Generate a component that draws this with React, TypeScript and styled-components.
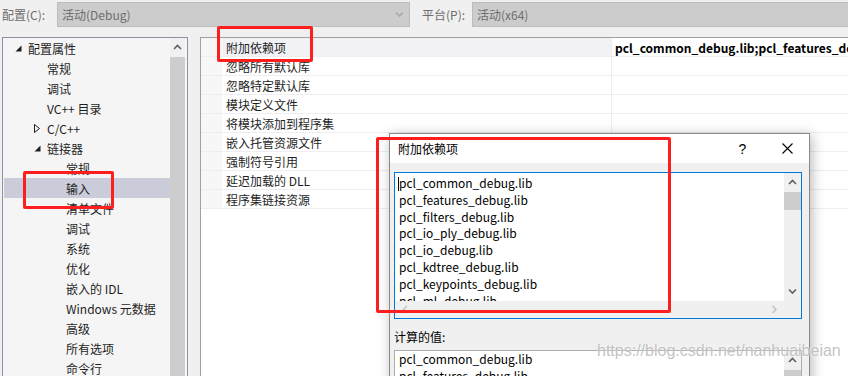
import React from "react"
import styled, { createGlobalStyle } from "styled-components"

const GlobalStyle = createGlobalStyle`
  html, body {
    margin: 0;
    padding: 0;
    background: #f0f0f0;
  }
  body {
    font-family: "Noto Sans CJK SC", "Noto Sans", sans-serif;
    font-size: 12px;
    color: #1e1e1e;
  }
`

const Screen = styled.div`
  position: relative;
  width: 848px;
  height: 376px;
  overflow: hidden;
  background: #f0f0f0;
  display: flex;
  flex-direction: column;
`

/* ---------- top configuration bar ---------- */

const TopBar = styled.div`
  display: flex;
  align-items: center;
  height: 25px;
  padding: 2px 0 10px 2px;
`

const FieldLabel = styled.span<{ $width: number; $gap?: number }>`
  width: ${({ $width }) => $width}px;
  margin-left: ${({ $gap }) => $gap ?? 0}px;
  color: #6d6d6d;
  white-space: nowrap;
  flex-shrink: 0;
`

const Combo = styled.div<{ $width?: number }>`
  ${({ $width }) => ($width ? `width: ${$width}px; flex-shrink: 0;` : "flex: 1; margin-right: -2px;")}
  height: 25px;
  box-sizing: border-box;
  border: 1px solid #bcbcbc;
  background: #cccccc;
  color: #6d6d6d;
  display: flex;
  align-items: center;
  justify-content: space-between;
  padding: 0 5px 0 4px;
`

/* ---------- main panels ---------- */

const Workspace = styled.div`
  flex: 1;
  min-height: 0;
  display: flex;
  gap: 12px;
  padding-left: 2px;
`

const TreePanel = styled.div`
  width: 186px;
  flex-shrink: 0;
  box-sizing: border-box;
  border: 1px solid #8e90a6;
  border-bottom: none;
  background: #f5f5f5;
  display: flex;
`

const Tree = styled.div`
  flex: 1;
  display: flex;
  flex-direction: column;
  padding-left: 1px;
`

const TreeRow = styled.div<{ $level: number; $selected?: boolean }>`
  height: 20px;
  flex-shrink: 0;
  display: flex;
  align-items: center;
  padding-left: ${({ $level }) => 8 + $level * 19}px;
  background: ${({ $selected }) => ($selected ? "#cbccda" : "transparent")};
  white-space: nowrap;
`

const ToggleSlot = styled.span`
  width: 16px;
  height: 20px;
  display: flex;
  align-items: center;
  padding-left: 3px;
  box-sizing: border-box;
`

const Scrollbar = styled.div`
  width: 17px;
  flex-shrink: 0;
  display: flex;
  flex-direction: column;
  padding: 0 2px 0 0;
  box-sizing: border-box;
`

const ScrollButton = styled.div`
  height: 19px;
  flex-shrink: 0;
  display: flex;
  align-items: center;
  justify-content: center;
  background: #f0f0f0;
`

const ScrollThumb = styled.div<{ $height?: number }>`
  background: #cdcdcd;
  ${({ $height }) => ($height ? `height: ${$height}px; flex-shrink: 0;` : "flex: 1;")}
`

const ScrollSpacer = styled.div`
  flex: 1;
`

const GridPanel = styled.div`
  flex: 1;
  margin-right: -40px;
  border-left: 1px solid #a0a0a0;
  border-top: 1px solid #a0a0a0;
  background: #ffffff;
  display: flex;
  flex-direction: column;
`

const PropRow = styled.div`
  display: grid;
  grid-template-columns: 21px 390px 1fr;
  height: 19px;
  flex-shrink: 0;
  border-bottom: 1px solid #eeeef2;
  box-sizing: border-box;
`

const Gutter = styled.div`
  background: #f7f7f7;
`

const PropName = styled.div<{ $active?: boolean }>`
  display: flex;
  align-items: center;
  padding-left: 4px;
  border-right: 1px solid #eeeef2;
  background: ${({ $active }) => ($active ? "#f2f2f6" : "#ffffff")};
  white-space: nowrap;
`

const PropValue = styled.div`
  display: flex;
  align-items: center;
  padding-left: 3px;
  font-weight: bold;
  color: #000;
  white-space: nowrap;
  overflow: hidden;
`

/* ---------- dialog ---------- */

const Dialog = styled.div`
  position: absolute;
  left: 389px;
  top: 133px;
  width: 421px;
  height: 260px;
  box-sizing: border-box;
  border: 1px solid #8a8a8a;
  background: #f0f0f0;
  box-shadow: 2px 2px 12px rgba(0, 0, 0, 0.28);
  display: flex;
  flex-direction: column;
`

const TitleBar = styled.div`
  height: 29px;
  flex-shrink: 0;
  background: #ffffff;
  display: flex;
  align-items: center;
  padding-left: 8px;
  color: #000;
`

const Title = styled.span`
  flex: 1;
`

const TitleButton = styled.span<{ $width: number }>`
  width: ${({ $width }) => $width}px;
  height: 29px;
  display: flex;
  align-items: center;
  justify-content: center;
  font-family: "Liberation Sans", sans-serif;
  font-size: 14px;
  color: #000;
`

const DialogBody = styled.div`
  flex: 1;
  display: flex;
  flex-direction: column;
  padding: 9px 7px 0 4px;
`

const EditBox = styled.div`
  height: 147px;
  flex-shrink: 0;
  box-sizing: border-box;
  border: 1px solid #0078d7;
  display: grid;
  grid-template-columns: 1fr 17px;
  grid-template-rows: 1fr 17px;
  background: #f0f0f0;
`

const Lines = styled.div<{ $padTop: number }>`
  background: #ffffff;
  overflow: hidden;
  padding: ${({ $padTop }) => $padTop}px 0 0 4px;
  line-height: 16.8px;
  color: #000;
`

const Line = styled.div`
  white-space: nowrap;
  position: relative;
`

const Caret = styled.span`
  position: absolute;
  left: -1px;
  top: 2px;
  width: 1px;
  height: 14px;
  background: #000;
`

const VScroll = styled.div`
  display: flex;
  flex-direction: column;
  background: #f0f0f0;
`

const HScroll = styled.div`
  display: flex;
  align-items: center;
  justify-content: space-between;
  padding: 0 6px 0 7px;
  background: #f0f0f0;
`

const SectionLabel = styled.div`
  margin-top: 10px;
  line-height: 16px;
  color: #000;
`

const ValueBox = styled.div`
  margin-top: 5px;
  flex: 1;
  box-sizing: border-box;
  border: 1px solid #adadad;
  background: #ffffff;
  display: grid;
  grid-template-columns: 1fr 17px;
`

/* ---------- overlays ---------- */

const Highlight = styled.div<{ $x: number; $y: number; $w: number; $h: number }>`
  position: absolute;
  left: ${({ $x }) => $x}px;
  top: ${({ $y }) => $y}px;
  width: ${({ $w }) => $w}px;
  height: ${({ $h }) => $h}px;
  box-sizing: border-box;
  border: 3px solid #fe1e1e;
  border-radius: 2px;
  pointer-events: none;
`

const Watermark = styled.div`
  position: absolute;
  left: 597px;
  top: 342px;
  font-family: "Liberation Sans", Arial, sans-serif;
  font-size: 16px;
  color: rgba(175, 175, 175, 0.75);
  text-shadow: 0 0 2px rgba(255, 255, 255, 0.9);
  white-space: nowrap;
  pointer-events: none;
`

/* ---------- icons ---------- */

const Chevron = ({ dir, color = "#606060" }: { dir: "up" | "down" | "left" | "right"; color?: string }) => {
  const pts = {
    up: "1,5 4.5,1.5 8,5",
    down: "1,1.5 4.5,5 8,1.5",
    left: "5,1 1.5,4.5 5,8",
    right: "1.5,1 5,4.5 1.5,8",
  }[dir]
  const horiz = dir === "up" || dir === "down"
  return (
    <svg width={horiz ? 9 : 7} height={horiz ? 7 : 9} viewBox={horiz ? "0 0 9 7" : "0 0 7 9"}>
      <polyline points={pts} fill="none" stroke={color} strokeWidth="1.6" />
    </svg>
  )
}

const Expander = ({ open }: { open: boolean }) =>
  open ? (
    <svg width="7" height="7" viewBox="0 0 7 7">
      <polygon points="6.5,0.5 6.5,6.5 0.5,6.5" fill="#1e1e1e" />
    </svg>
  ) : (
    <svg width="6" height="9" viewBox="0 0 6 9">
      <polygon points="0.5,0.5 5.5,4.5 0.5,8.5" fill="none" stroke="#1e1e1e" strokeWidth="1" />
    </svg>
  )

const CloseIcon = () => (
  <svg width="11" height="11" viewBox="0 0 11 11">
    <path d="M0.5 0.5 L10.5 10.5 M10.5 0.5 L0.5 10.5" stroke="#000" strokeWidth="1.1" />
  </svg>
)

/* ---------- data ---------- */

type TreeItem = { label: string; level: number; toggle?: "open" | "closed"; selected?: boolean }

const treeItems: TreeItem[] = [
  { label: "配置属性", level: 0, toggle: "open" },
  { label: "常规", level: 1 },
  { label: "调试", level: 1 },
  { label: "VC++ 目录", level: 1 },
  { label: "C/C++", level: 1, toggle: "closed" },
  { label: "链接器", level: 1, toggle: "open" },
  { label: "常规", level: 2 },
  { label: "输入", level: 2, selected: true },
  { label: "清单文件", level: 2 },
  { label: "调试", level: 2 },
  { label: "系统", level: 2 },
  { label: "优化", level: 2 },
  { label: "嵌入的 IDL", level: 2 },
  { label: "Windows 元数据", level: 2 },
  { label: "高级", level: 2 },
  { label: "所有选项", level: 2 },
  { label: "命令行", level: 2 },
]

const properties: [string, string][] = [
  ["附加依赖项", "pcl_common_debug.lib;pcl_features_debug.lib;pcl_filters_debug.lib;"],
  ["忽略所有默认库", ""],
  ["忽略特定默认库", ""],
  ["模块定义文件", ""],
  ["将模块添加到程序集", ""],
  ["嵌入托管资源文件", ""],
  ["强制符号引用", ""],
  ["延迟加载的 DLL", ""],
  ["程序集链接资源", ""],
]

const libs = [
  "pcl_common_debug.lib",
  "pcl_features_debug.lib",
  "pcl_filters_debug.lib",
  "pcl_io_ply_debug.lib",
  "pcl_io_debug.lib",
  "pcl_kdtree_debug.lib",
  "pcl_keypoints_debug.lib",
  "pcl_ml_debug.lib",
]

const App = () => {
  return (
    <Screen>
      <GlobalStyle />
      <TopBar>
        <FieldLabel $width={55}>配置(C):</FieldLabel>
        <Combo $width={353}>
          <span>活动(Debug)</span>
          <Chevron dir="down" color="#a8a8a8" />
        </Combo>
        <FieldLabel $width={50} $gap={12}>平台(P):</FieldLabel>
        <Combo>
          <span>活动(x64)</span>
        </Combo>
      </TopBar>

      <Workspace>
        <TreePanel>
          <Tree>
            {treeItems.map((item, i) => (
              <TreeRow key={i} $level={item.level} $selected={item.selected}>
                <ToggleSlot>{item.toggle && <Expander open={item.toggle === "open"} />}</ToggleSlot>
                {item.label}
              </TreeRow>
            ))}
          </Tree>
          <Scrollbar>
            <ScrollButton>
              <Chevron dir="up" />
            </ScrollButton>
            <ScrollThumb />
          </Scrollbar>
        </TreePanel>

        <GridPanel>
          {properties.map(([name, value], i) => (
            <PropRow key={name}>
              <Gutter />
              <PropName $active={i === 0}>{name}</PropName>
              <PropValue>{value}</PropValue>
            </PropRow>
          ))}
        </GridPanel>
      </Workspace>

      <Dialog>
        <TitleBar>
          <Title>附加依赖项</Title>
          <TitleButton $width={45}>?</TitleButton>
          <TitleButton $width={44}>
            <CloseIcon />
          </TitleButton>
        </TitleBar>
        <DialogBody>
          <EditBox>
            <Lines $padTop={2}>
              {libs.map((lib, i) => (
                <Line key={lib}>
                  {i === 0 && <Caret />}
                  {lib}
                </Line>
              ))}
            </Lines>
            <VScroll>
              <ScrollButton>
                <Chevron dir="up" />
              </ScrollButton>
              <ScrollThumb $height={18} />
              <ScrollSpacer />
              <ScrollButton>
                <Chevron dir="down" />
              </ScrollButton>
            </VScroll>
            <HScroll>
              <Chevron dir="left" color="#c4c4c4" />
              <Chevron dir="right" color="#c4c4c4" />
            </HScroll>
            <div />
          </EditBox>
          <SectionLabel>计算的值:</SectionLabel>
          <ValueBox>
            <Lines $padTop={0}>
              <Line>pcl_common_debug.lib</Line>
              <Line>pcl_features_debug.lib</Line>
            </Lines>
            <VScroll>
              <ScrollButton>
                <Chevron dir="up" />
              </ScrollButton>
              <ScrollThumb />
            </VScroll>
          </ValueBox>
        </DialogBody>
      </Dialog>

      <Highlight $x={217} $y={26} $w={96} $h={36} />
      <Highlight $x={23} $y={171} $w={91} $h={38} />
      <Highlight $x={376} $y={137} $w={295} $h={176} />

      <Watermark>https://blog.csdn.net/nanhuaibeian</Watermark>
    </Screen>
  )
}

export default App
